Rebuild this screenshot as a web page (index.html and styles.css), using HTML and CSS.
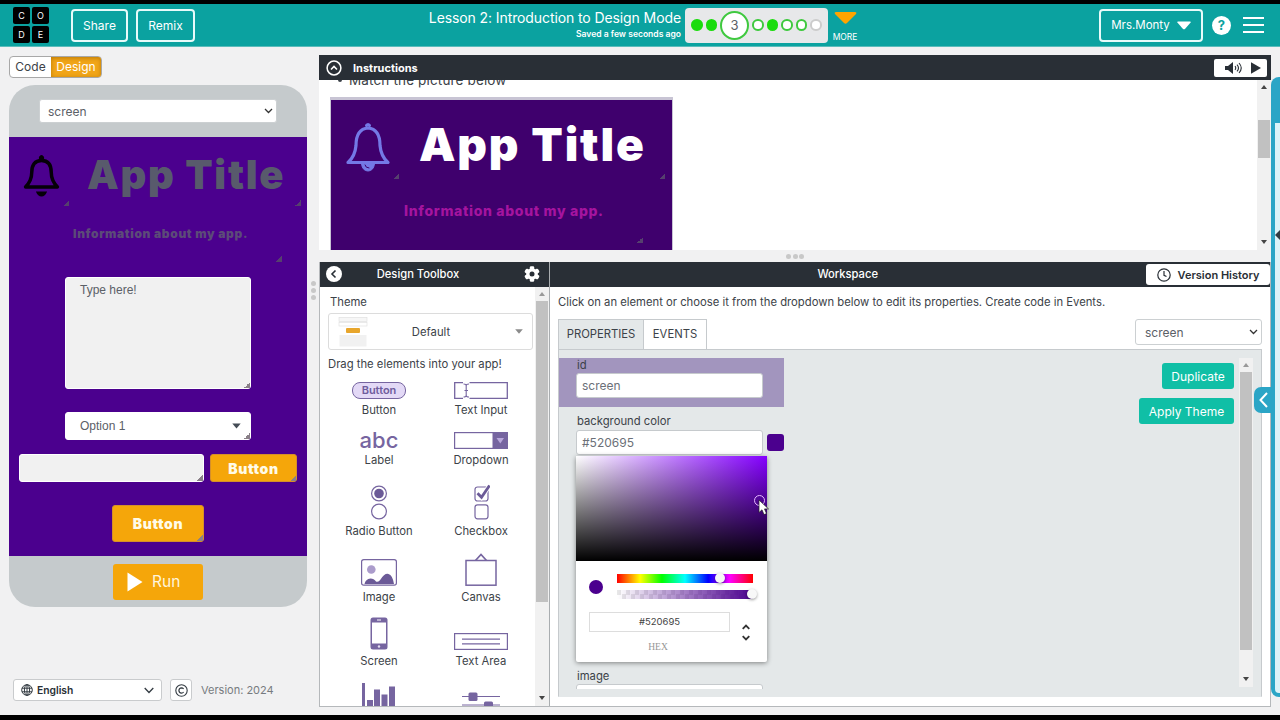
FILE: index.html
```html
<!DOCTYPE html>
<html lang="en">
<head>
  <meta charset="UTF-8" />
  <meta name="viewport" content="width=device-width, initial-scale=1.0" />
  <title>App Lab - Introduction to Design Mode</title>
  <link rel="stylesheet" href="styles.css">
</head>
<body>
  <header class="header">
    <div class="logo"><span>C</span><span>O</span><span>D</span><span>E</span></div>
    <button class="header-btn share">Share</button>
    <button class="header-btn remix">Remix</button>
    <div class="lesson">
      <div class="lesson-title">Lesson 2: Introduction to Design Mode</div>
      <div class="lesson-saved">Saved a few seconds ago</div>
    </div>
    <div class="progress">
      <i class="dot done"></i>
      <i class="dot done"></i>
      <span class="current">3</span>
      <i class="dot open"></i>
      <i class="dot done"></i>
      <i class="dot open"></i>
      <i class="dot open"></i>
      <i class="dot"></i>
    </div>
    <div class="more">
      <svg width="23" height="14" viewBox="0 0 23 14"><path d="M2 1h19q2 0 1 2l-9 9q-1.500 1.500-3 0l-9-9q-1-2 1-2z" fill="#ffa400"/></svg>
      <span>MORE</span>
    </div>
    <button class="header-btn user">
      <span>Mrs.Monty</span>
      <svg width="14" height="9" viewBox="0 0 14 9"><path d="M1 .5h12q1 0 .6 1l-5.400 6.300q-1.200 1-2.400 0L.4 1.500q-.4-1 .6-1z" fill="#fff"/></svg>
    </button>
    <span class="help">?</span>
    <div class="menu"><i></i><i></i><i></i></div>
  </header>

  <div class="main">
    <div class="left">
      <div class="mode-toggle">
        <span class="mode">Code</span><span class="mode active">Design</span>
      </div>

      <div class="phone">
        <div class="phone-top">
          <div class="select phone-select">
            <span>screen</span>
            <svg width="9" height="6" viewBox="0 0 9 6"><path d="M1 1l3.500 3.500L8 1" fill="none" stroke="#333" stroke-width="1.300"/></svg>
          </div>
        </div>
        <div class="app-screen">
          <svg class="app-bell" width="37" height="43" viewBox="0 0 36 43" preserveAspectRatio="none">
            <path d="M2.500 33q6-6.500 6-14.500 0-12 9.500-12t9.500 12q0 8 6 14.500z" fill="none" stroke="#050008" stroke-width="3.400" stroke-linejoin="round"/>
            <path d="M15.500 5V3q2.500-4 5 0v2zM12.500 37.500h11q-2 5-5.500 5t-5.500-5z" fill="#050008"/>
          </svg>
          <i class="grip g1"></i>
          <div class="app-title">App Title</div>
          <i class="grip g2"></i>
          <div class="app-info">Information about my app.</div>
          <i class="grip g3"></i>
          <div class="app-textarea">Type here!<i class="corner"></i></div>
          <div class="app-dropdown">Option 1
            <svg width="9" height="6" viewBox="0 0 9 6"><path d="M.3.500h8.400L4.500 5.500z" fill="#444c55"/></svg>
            <i class="corner"></i>
          </div>
          <div class="app-input"><i class="corner"></i></div>
          <div class="app-button b1">Button<i class="corner"></i></div>
          <div class="app-button b2">Button<i class="corner"></i></div>
        </div>
        <div class="phone-bottom">
          <button class="run">
            <svg width="16" height="20" viewBox="0 0 16 20"><path d="M.5.500L15.500 10 .5 19.500z" fill="#fff"/></svg>
            <span>Run</span>
          </button>
        </div>
      </div>

      <div class="footer">
        <div class="language">
          <svg width="12" height="12" viewBox="0 0 12 12" fill="none" stroke="#333b42"><circle cx="6" cy="6" r="5.300"/><ellipse cx="6" cy="6" rx="2.600" ry="5.300"/><path d="M1 4.200h10M1 7.800h10M6 .7v10.600"/></svg>
          <span>English</span>
          <svg width="10" height="7" viewBox="0 0 10 7"><path d="M.7 1L5 5.500 9.300 1" fill="none" stroke="#333b42" stroke-width="1.300"/></svg>
        </div>
        <div class="copyright">
          <svg width="13" height="13" viewBox="0 0 13 13" fill="none" stroke="#333b42"><circle cx="6.500" cy="6.500" r="5.700" stroke-width="1.100"/><path d="M8.600 5q-.8-1.200-2.100-1.200Q4 4 3.900 6.500 4 9 6.500 9.200q1.300 0 2.100-1.200" stroke-width="1.200"/></svg>
        </div>
        <span class="version">Version: 2024</span>
      </div>
    </div>

    <div class="resize-v"><i></i><i></i><i></i></div>

    <div class="right">
      <div class="bar instructions-bar">
        <svg width="16" height="16" viewBox="0 0 16 16" fill="none" stroke="#fff"><circle cx="8" cy="8" r="6.900" stroke-width="1.500"/><path d="M5 9.500l3-3 3 3" stroke-width="1.600"/></svg>
        <span class="instructions-title">Instructions</span>
        <div class="audio">
          <svg width="18" height="12" viewBox="0 0 18 12"><path d="M0 4h3l5-4v12l-5-4H0z" fill="#292f36"/><path d="M10 4.200q1.500 1.800 0 3.600M12 2.600q3 3.400 0 6.800M14 1q4.500 5 0 10" fill="none" stroke="#292f36" stroke-width="1.100"/></svg>
          <svg width="10" height="12" viewBox="0 0 10 12"><path d="M0 .3L10 6 0 11.700z" fill="#292f36"/></svg>
        </div>
      </div>
      <div class="instructions">
        <div class="instructions-body">
          <div class="step"><i></i><span>Match the picture below</span></div>
          <div class="example">
            <svg class="ex-bell" width="46" height="50" viewBox="0 0 46 50" fill="none" stroke="#7479e6" stroke-linejoin="round" stroke-linecap="round">
              <path d="M3 40.500q7-6 8-17Q11 7 23 6q12 1 12 17.500 1 11 8 17z" stroke-width="3.200"/>
              <path d="M21.500 3.500q1.500-2 3 0" stroke-width="3"/>
              <path d="M16.500 42q1 7 6.500 7t6.500-7z" fill="#7479e6" stroke-width="1"/>
              <path d="M20 43q.5 3 4 3" stroke="#3f006d" stroke-width="1"/>
            </svg>
            <i class="grip e1"></i>
            <div class="ex-title">App Title</div>
            <i class="grip e2"></i>
            <div class="ex-info">Information about my app.</div>
            <i class="grip e3"></i>
          </div>
        </div>
        <div class="scrollbar instr-scroll"><b class="up dark"></b><i class="thumb"></i><b class="down"></b></div>
      </div>
      <div class="resize-h"><i></i><i></i><i></i></div>

      <div class="panels">
        <div class="toolbox">
          <div class="bar toolbox-bar">
            <svg width="16" height="16" viewBox="0 0 16 16"><circle cx="8" cy="8" r="8" fill="#fff"/><path d="M9.500 4.500L6 8l3.500 3.500" fill="none" stroke="#292f36" stroke-width="1.600"/></svg>
            <span class="toolbox-title">Design Toolbox</span>
            <svg width="16" height="16" viewBox="0 0 16 16"><g fill="#fff"><rect x="5.800" y=".3" width="4.400" height="15.400" rx="1.200"/><rect x="5.800" y=".3" width="4.400" height="15.400" rx="1.200" transform="rotate(60 8 8)"/><rect x="5.800" y=".3" width="4.400" height="15.400" rx="1.200" transform="rotate(120 8 8)"/><circle cx="8" cy="8" r="5.800"/></g><circle cx="8" cy="8" r="2.500" fill="#292f36"/></svg>
          </div>
          <div class="toolbox-wrap">
            <div class="toolbox-body">
              <div class="theme-label">Theme</div>
              <div class="theme">
                <svg width="30" height="30" viewBox="0 0 30 30"><rect x="1" y=".5" width="28" height="4" fill="#f6f6f6" stroke="#ddd" stroke-width=".6"/><rect x="1" y="5.500" width="28" height="3.500" fill="#fff" stroke="#ddd" stroke-width=".6"/><rect x="8" y="11" width="14" height="5" rx="1" fill="#e8a62c"/><rect x="1.500" y="18" width="27" height="11.500" fill="#f1f1f1"/></svg>
                <span>Default</span>
                <svg width="8" height="5" viewBox="0 0 8 5"><path d="M.2.200h7.600L4 4.800z" fill="#8b8b8b"/></svg>
              </div>
              <div class="drag-label">Drag the elements into your app!</div>
              <div class="elements">
                <div class="el">
                  <div class="icon-button">Button</div>
                  <span>Button</span>
                </div>
                <div class="el">
                  <svg width="54" height="17" viewBox="0 0 54 17" fill="none" stroke="#7665a0"><path d="M9 .7H.7v15.600H9M15.500.7h37.800v15.600H15.500" stroke-width="1.300"/><path d="M9.500 2q2.700 0 2.700 1.500V13.500q0 1.500-2.700 1.500M15 2q-2.800 0-2.800 1.500M15 15q-2.800 0-2.800-1.500M10.500 8.500h3.500" stroke-width="1.100"/></svg>
                  <span>Text Input</span>
                </div>
                <div class="el">
                  <div class="icon-label">abc</div>
                  <span>Label</span>
                </div>
                <div class="el">
                  <svg width="54" height="17" viewBox="0 0 54 17"><rect x=".6" y=".6" width="52.800" height="15.800" fill="#fff" stroke="#7665a0" stroke-width="1.200"/><path d="M38.500 0H54v17H38.500z" fill="#7665a0"/><path d="M42.500 6h7.500l-3.700 5.500z" fill="#b9a8dc"/></svg>
                  <span>Dropdown</span>
                </div>
                <div class="el">
                  <svg width="18" height="35" viewBox="0 0 18 35"><g fill="none" stroke="#7665a0" stroke-width="1.200"><circle cx="9" cy="8.500" r="7.400"/><circle cx="9" cy="26.500" r="7.400"/></g><circle cx="9" cy="8.500" r="4.800" fill="#6b5a97"/></svg>
                  <span>Radio Button</span>
                </div>
                <div class="el">
                  <svg width="18" height="36" viewBox="0 0 18 36" fill="none" stroke="#7665a0"><rect x="3" y="3" width="13" height="14" rx="2.500" stroke-width="1.200"/><rect x="3" y="20.800" width="13" height="14" rx="2.500" stroke-width="1.200"/><path d="M5.500 9.500l4 4L17.500 1.500" stroke="#fff" stroke-width="4.500"/><path d="M5.500 9.200l4 4L17.500 1.500" stroke="#6b5a97" stroke-width="2.800"/></svg>
                  <span>Checkbox</span>
                </div>
                <div class="el">
                  <svg width="36" height="27" viewBox="0 0 36 27"><rect x=".6" y=".6" width="34.800" height="25.600" rx="2.200" fill="#fff" stroke="#7665a0" stroke-width="1.200"/><circle cx="10.300" cy="10.500" r="4.300" fill="#ab9ccb"/><path d="M3.500 25q1-5 6-5.500 3.500 0 5.500 3 2.500 1 4.500-2 4-6.500 8-5.500 4 1 5.500 10z" fill="#6b5a97"/></svg>
                  <span>Image</span>
                </div>
                <div class="el">
                  <svg width="32" height="33" viewBox="0 0 32 33" fill="none" stroke="#7665a0" stroke-width="1.500"><rect x="1" y="7.500" width="30" height="24.700"/><path d="M10.500 7.500L16 1.500l5.500 6" stroke-width="1.800"/></svg>
                  <span>Canvas</span>
                </div>
                <div class="el">
                  <svg width="18" height="33" viewBox="0 0 18 33"><rect x=".5" y=".5" width="17" height="32" rx="2.500" fill="#7665a0"/><path d="M2 5.500h14v21H2z" fill="#fff"/><path d="M7 3h4" stroke="#fff"/><circle cx="9" cy="29.500" r="1.200" fill="#e5def2"/></svg>
                  <span>Screen</span>
                </div>
                <div class="el">
                  <svg width="54" height="17" viewBox="0 0 54 17" fill="none" stroke="#7665a0" stroke-width="1.200"><rect x=".6" y=".6" width="52.800" height="15.800"/><path d="M8 6.200h38M8 10.800h38"/></svg>
                  <span>Text Area</span>
                </div>
                <div class="el last">
                  <svg width="34" height="30" viewBox="0 0 34 30" fill="#7665a0"><path d="M0 0h3v30H0zM5 17h6v13H5zM12 6.500h6V30h-6zM19.500 11.500h6V30h-6zM27 3.500h6V30h-6z"/></svg>
                </div>
                <div class="el last">
                  <svg width="38" height="30" viewBox="0 0 38 30"><path d="M0 13.500h38M0 22h38" stroke="#7665a0"/><rect x="6.500" y="9.500" width="9" height="8.500" rx="1.500" fill="#7665a0"/><rect x="22" y="18.500" width="9" height="8.500" rx="1.500" fill="#7665a0"/></svg>
                </div>
              </div>
            </div>
            <div class="scrollbar toolbox-scroll"><b class="up"></b><i class="thumb"></i><b class="down"></b></div>
          </div>
        </div>

        <div class="workspace">
          <div class="bar workspace-bar">
            <span class="workspace-title">Workspace</span>
            <div class="history">
              <svg width="14" height="14" viewBox="0 0 14 14" fill="none" stroke="#292f36" stroke-width="1.200"><circle cx="7" cy="7" r="6.200"/><path d="M7 3v4.300l2.500 1.200"/></svg>
              <span>Version History</span>
            </div>
          </div>
          <div class="workspace-body">
            <div class="hint">Click on an element or choose it from the dropdown below to edit its properties. Create code in Events.</div>
            <div class="tab-row">
              <div class="tabs"><span class="tab active">PROPERTIES</span><span class="tab events">EVENTS</span></div>
              <div class="select element-select">
                <span>screen</span>
                <svg width="9" height="6" viewBox="0 0 9 6"><path d="M1 1l3.500 3.500L8 1" fill="none" stroke="#333" stroke-width="1.300"/></svg>
              </div>
            </div>
            <div class="properties">
              <div class="fields">
                <div class="field id-field">
                  <label>id</label>
                  <div class="text-box">screen</div>
                </div>
                <div class="field color-field">
                  <label>background color</label>
                  <div class="color-row"><div class="text-box">#520695</div><i class="swatch"></i></div>
                  <div class="picker">
                    <div class="saturation">
                      <i class="pick-ring"></i>
                      <svg class="cursor" width="12" height="17" viewBox="0 0 12 17"><path d="M1 1v12.500l3-2.700 2 4.800 2.500-1-2-4.700h4z" fill="#fff" stroke="#222" stroke-width=".7"/></svg>
                    </div>
                    <div class="sliders">
                      <i class="current-color"></i>
                      <div class="tracks">
                        <div class="hue"><i class="knob"></i></div>
                        <div class="alpha"><i class="knob"></i></div>
                      </div>
                    </div>
                    <div class="hex-row">
                      <div class="hex">
                        <div class="hex-box">#520695</div>
                        <span>HEX</span>
                      </div>
                      <svg width="8" height="17" viewBox="0 0 8 17" fill="none" stroke="#333" stroke-width="1.800"><path d="M.7 4.800L4 1.500l3.300 3.300M.7 12.200L4 15.500l3.300-3.300"/></svg>
                    </div>
                  </div>
                </div>
                <div class="field image-field">
                  <label>image</label>
                  <div class="text-box"></div>
                </div>
              </div>
              <div class="actions">
                <button class="action duplicate">Duplicate</button>
                <button class="action apply">Apply Theme</button>
              </div>
              <div class="scrollbar prop-scroll"><b class="up"></b><i class="thumb"></i><b class="down"></b></div>
            </div>
          </div>
        </div>
      </div>
    </div>

    <aside class="side-panel">
      <div class="side-inner"><i class="side-arrow"></i></div>
      <div class="side-tab"><svg width="9" height="16" viewBox="0 0 9 16"><path d="M8 1L1.500 8 8 15" fill="none" stroke="#fff" stroke-width="2"/></svg></div>
    </aside>
  </div>
</body>
</html>
```
FILE: styles.css
```css
* {
  box-sizing: border-box;
}
body {
  display: flex;
  flex-direction: column;
  width: 1280px;
  height: 720px;
  margin: 0;
  border-top: 4px solid #000;
  border-bottom: 5px solid #000;
  overflow: hidden;
  background: #f1f1f2;
  color: #3c4248;
  font-family: Inter, "Open Sans", sans-serif;
  font-size: 11.270px;
  white-space: nowrap;
}
button {
  padding: 0;
  border: 0;
  font: inherit;
}
svg {
  display: block;
  flex: none;
}

/* header */
.header {
  display: flex;
  align-items: center;
  flex: none;
  height: 43px;
  padding-left: 13px;
  background: #0ba2a0;
  border-bottom: 1px solid #5bbcbb;
  color: #fff;
}
.logo {
  display: grid;
  grid-template-columns: 17px 17px;
  gap: 2px;
  margin-right: 22px;
}
.logo span {
  height: 17px;
  border-radius: 2px;
  background: #000;
  font-size: 9px;
  line-height: 17px;
  text-align: center;
}
.header-btn {
  display: flex;
  align-items: center;
  justify-content: center;
  height: 33px;
  border: 2px solid #e8fbfa;
  border-radius: 4px;
  background: none;
  color: #fff;
  font-size: 12px;
}
.share {
  width: 57px;
  margin-right: 8px;
}
.remix {
  width: 59px;
}
.lesson {
  flex: none;
  width: 486px;
  text-align: right;
}
.lesson-title {
  font-size: 14px;
  letter-spacing: -.1px;
  line-height: 18px;
}
.lesson-saved {
  font-size: 8.550px;
  font-weight: 600;
  line-height: 14px;
}
.progress {
  display: flex;
  align-items: center;
  width: 143px;
  height: 35px;
  margin-left: 4px;
  padding-left: 6px;
  gap: 3px;
  border-radius: 4px;
  background: #e7e8ea;
}
.dot {
  width: 11.500px;
  height: 11.500px;
  flex: none;
  border: 2px solid #ccc;
  border-radius: 50%;
  background: #fff;
}
.dot.done {
  border-color: #1bdc0e;
  background: #1bdc0e;
}
.dot.open {
  border-color: #3fc93f;
}
.current {
  width: 29px;
  height: 29px;
  flex: none;
  border: 2px solid #3fc93f;
  border-radius: 50%;
  background: #fff;
  color: #5b6067;
  font-size: 13px;
  line-height: 25px;
  text-align: center;
}
.more {
  display: flex;
  flex-direction: column;
  align-items: center;
  width: 24px;
  margin: 4px 0 0 5px;
  gap: 6px;
  font-size: 8.500px;
  line-height: 12px;
}
.user {
  width: 104px;
  margin-left: 242px;
  gap: 7px;
  font-size: 11.500px;
}
.help {
  width: 19px;
  height: 19px;
  margin-left: 9px;
  border-radius: 50%;
  background: #fff;
  color: #0ba2a0;
  font-size: 13px;
  font-weight: 700;
  line-height: 19px;
  text-align: center;
}
.menu {
  display: flex;
  flex-direction: column;
  width: 21px;
  margin-left: 12px;
  gap: 5px;
}
.menu i {
  height: 2px;
  background: #fff;
}

.main {
  display: flex;
  flex: 1;
  min-height: 0;
}

/* left column */
.left {
  display: flex;
  flex-direction: column;
  width: 307px;
  padding: 9px 0 0 9px;
}
.mode-toggle {
  display: flex;
  width: 93px;
  height: 22px;
  border: 1px solid #a8a8a8;
  border-radius: 4px;
  overflow: hidden;
  background: #fff;
  font-size: 12px;
  line-height: 19px;
}
.mode {
  width: 41px;
  text-align: center;
}
.mode.active {
  width: 50px;
  background: #f1a518;
  box-shadow: inset 0 1px 4px #b97804;
  color: #fff;
}
.phone {
  height: 522px;
  margin-top: 7px;
  border-radius: 26px;
  overflow: hidden;
  background: #c5cacc;
}
.phone-top {
  height: 52px;
  padding: 14px 0 0 30px;
}
.select {
  display: flex;
  align-items: center;
  justify-content: space-between;
  border: 1px solid #ccd0d2;
  border-radius: 3px;
  background: #fff;
  color: #5b6067;
  font-size: 12px;
}
.phone-select {
  width: 238px;
  height: 24px;
  padding: 0 3px 0 8px;
}
/* design canvas, elements are freely placed by the user */
.app-screen {
  position: relative;
  height: 419px;
  background: #4b008e;
}
.app-screen > *, .example > * {
  position: absolute;
}
.app-bell {
  left: 14px;
  top: 17px;
}
.app-title {
  left: 78px;
  top: 14px;
  color: #585a6c;
  font-size: 40px;
  font-weight: 900;
  letter-spacing: 1.700px;
  line-height: 48px;
}
.app-info {
  left: 64px;
  top: 88px;
  color: #5c4b78;
  font-size: 12px;
  font-weight: 900;
  letter-spacing: .64px;
  line-height: 18px;
}
.grip {
  width: 6px;
  height: 6px;
  background: linear-gradient(135deg, transparent 50%, #55406e 50%);
}
.g1 {
  left: 54px;
  top: 63px;
}
.g2 {
  left: 286px;
  top: 63px;
}
.g3 {
  left: 267px;
  top: 119px;
}
.app-textarea, .app-dropdown, .app-input {
  border: 1px solid #fff;
  border-radius: 3px;
  background: #f1f1f1;
  color: #5b6067;
  font-family: "Liberation Sans", Arial, sans-serif;
  font-size: 12px;
}
.app-textarea {
  left: 56px;
  top: 140px;
  width: 186px;
  height: 112px;
  padding: 5px 14px;
}
.app-dropdown {
  display: flex;
  align-items: center;
  justify-content: space-between;
  left: 56px;
  top: 275px;
  width: 186px;
  height: 28px;
  padding: 0 9px 0 14px;
  background: #fff;
}
.app-input {
  left: 10px;
  top: 317px;
  width: 185px;
  height: 28px;
}
.corner {
  position: absolute;
  right: 0;
  bottom: 0;
  width: 6px;
  height: 6px;
  background: linear-gradient(135deg, transparent 50%, #8a8088 50%);
}
.app-button {
  display: flex;
  align-items: center;
  justify-content: center;
  border: 1px solid #d58f2a;
  border-radius: 3px;
  background: #f5a60a;
  color: #fffbe8;
  font-size: 14px;
  font-weight: 900;
  letter-spacing: .6px;
}
.b1 {
  left: 201px;
  top: 317px;
  width: 87px;
  height: 28px;
}
.b2 {
  left: 103px;
  top: 368px;
  width: 92px;
  height: 37px;
}
.phone-bottom {
  padding: 8px 0 0 104px;
}
.run {
  display: flex;
  align-items: center;
  width: 90px;
  height: 36px;
  padding: 0 0 1px 14px;
  gap: 9px;
  border-radius: 3px;
  background: #f5a60a;
  color: #fff5dc;
  font-size: 15.500px;
}
.footer {
  display: flex;
  align-items: center;
  margin: 72px 0 0 4px;
}
.language, .copyright {
  display: flex;
  align-items: center;
  height: 22px;
  border: 1px solid #c9cbcd;
  border-radius: 3px;
  background: #fff;
}
.language {
  width: 149px;
  padding: 0 7px;
  color: #292f36;
  font-size: 10.300px;
  font-weight: 600;
}
.language span {
  flex: 1;
  margin-left: 4px;
}
.copyright {
  justify-content: center;
  width: 22px;
  margin: 0 9px 0 8px;
}
.version {
  color: #777b80;
  font-size: 11px;
}
.resize-v {
  display: flex;
  flex-direction: column;
  align-items: center;
  justify-content: center;
  width: 12px;
  height: 486px;
  gap: 2px;
}
.resize-v i, .resize-h i {
  width: 5px;
  height: 5px;
  border-radius: 50%;
  background: #c8c8c8;
}

/* instructions */
.right {
  display: flex;
  flex-direction: column;
  width: 952px;
  margin: 8px 0 8px;
}
.bar {
  display: flex;
  align-items: center;
  flex: none;
  height: 25px;
  background: #292f36;
  color: #fff;
  font-weight: 600;
}
.instructions-bar {
  position: relative;
  padding: 0 4px 0 7px;
  z-index: 1;
}
.instructions-title {
  margin-left: 11px;
  font-size: 11px;
  font-weight: 700;
}
.audio {
  display: flex;
  align-items: center;
  justify-content: center;
  width: 53px;
  height: 18px;
  margin-left: auto;
  padding-left: 5px;
  gap: 8px;
  border-radius: 2px;
  background: #fff;
}
.instructions {
  display: flex;
  flex: none;
  height: 170px;
  overflow: hidden;
  background: #fff;
}
.instructions-body {
  flex: 1;
  padding-left: 11px;
}
.step {
  display: flex;
  align-items: center;
  height: 17px;
  margin-top: -9px;
  padding-left: 8px;
  gap: 7px;
  font-size: 13.500px;
  letter-spacing: .15px;
}
.step i {
  width: 4px;
  height: 4px;
  border-radius: 50%;
  background: #3c4248;
}
.example {
  position: relative;
  width: 343px;
  height: 200px;
  margin-top: 9px;
  border: solid #c8c4d4;
  border-width: 3px 1px 0;
  background: #3f006d;
}
.ex-bell {
  left: 14px;
  top: 22px;
}
.ex-title {
  left: 88px;
  top: 19px;
  color: #fff;
  font-size: 46px;
  font-weight: 900;
  letter-spacing: 1.800px;
  line-height: 50px;
}
.ex-info {
  left: 73px;
  top: 101px;
  color: #a5149f;
  font-size: 14px;
  font-weight: 800;
  letter-spacing: .68px;
  line-height: 20px;
}
.e1 {
  left: 62px;
  top: 73px;
}
.e2 {
  left: 328px;
  top: 73px;
}
.e3 {
  left: 306px;
  top: 137px;
}
.resize-h {
  display: flex;
  align-items: center;
  justify-content: center;
  flex: none;
  height: 12px;
  gap: 1.500px;
}

/* scrollbars */
.scrollbar {
  display: flex;
  flex-direction: column;
  align-items: center;
  flex: none;
  width: 14px;
  background: #f1f1f1;
}
.scrollbar b {
  width: 0;
  height: 0;
  border: 3px solid transparent;
}
.scrollbar .up {
  margin-top: 2px;
  border-bottom: 4px solid #999;
}
.scrollbar .up.dark {
  border-bottom-color: #444;
}
.scrollbar .down {
  margin: auto 0 3px;
  border-top: 4px solid #444;
}
.thumb {
  width: 12px;
  background: #c1c1c1;
}
.instr-scroll .thumb {
  height: 38px;
  margin-top: 31px;
}
.toolbox-scroll .thumb {
  height: 301px;
  margin-top: 5px;
}
.prop-scroll .thumb {
  height: 278px;
  margin-top: 5px;
}

/* toolbox */
.panels {
  display: flex;
  flex: 1;
  min-height: 0;
  border: solid #b5b8bb;
  border-width: 0 1px 1px;
  background: #fff;
}
.toolbox {
  display: flex;
  flex-direction: column;
  width: 230px;
  border-right: 1px solid #a9adb0;
}
.toolbox-bar {
  justify-content: space-between;
  padding: 0 9px 1px 6px;
}
.toolbox-title, .workspace-title {
  font-size: 11.200px;
  font-weight: 500;
}
.toolbox-title {
  margin-right: 30px;
}
.toolbox-wrap {
  display: flex;
  flex: 1;
  min-height: 0;
}
.toolbox-body {
  width: 215px;
  padding: 8px 2px 0 8px;
  overflow: hidden;
}
.theme-label {
  padding-left: 2px;
  line-height: 15px;
}
.theme {
  display: flex;
  align-items: center;
  justify-content: space-between;
  width: 205px;
  height: 37px;
  margin-top: 3px;
  padding: 0 9px;
  border: 1px solid #dcdcdc;
  border-radius: 3px;
}
.theme span {
  margin-right: 21px;
}
.drag-label {
  margin-top: 7px;
  line-height: 15px;
}
.elements {
  display: grid;
  grid-template-columns: 102px 102px;
  grid-template-rows: 46px 50px 71px 66px 64px 50px;
}
.el {
  display: flex;
  flex-direction: column;
  align-items: center;
  justify-content: flex-end;
  gap: 3px;
  line-height: 16px;
}
.el.last {
  justify-content: flex-start;
  padding-top: 14px;
}
.icon-button {
  width: 54px;
  height: 17px;
  border: 1px solid #7665a0;
  border-radius: 8px;
  background: #e3d9f6;
  color: #6f5d9d;
  font-size: 11px;
  font-weight: 600;
  line-height: 15px;
  text-align: center;
}
.icon-label {
  color: #7665a0;
  font-size: 22px;
  font-weight: 500;
  line-height: 18px;
}

/* workspace */
.workspace {
  display: flex;
  flex-direction: column;
  flex: 1;
}
.workspace-bar {
  justify-content: flex-end;
  padding-right: 0;
}
.workspace-title {
  margin: 0 268px 1px 0;
}
.history {
  display: flex;
  align-items: center;
  justify-content: center;
  width: 124px;
  height: 21px;
  gap: 7px;
  border-radius: 3px;
  background: #fff;
  color: #292f36;
  font-size: 11px;
}
.workspace-body {
  padding: 8px 8px 0;
}
.hint {
  line-height: 15px;
}
.tab-row {
  display: flex;
  justify-content: space-between;
  height: 39px;
  padding-top: 9px;
}
.tabs {
  display: flex;
  height: 30px;
}
.tab {
  width: 63px;
  border: 1px solid #c6cacd;
  border-left: 0;
  border-bottom: 0;
  line-height: 29px;
  text-align: center;
}
.tab.active {
  width: 86px;
  border-left: 1px solid #c6cacd;
  background: #e4e8e9;
}
.element-select {
  width: 127px;
  height: 26px;
  padding: 0 3px 0 9px;
}
.properties {
  display: flex;
  height: 348px;
  padding: 8px 8px 9px 0;
  border: 1px solid #c6cacd;
  border-bottom-color: #e4e8e9;
  background: #e4e8e9;
}
.fields {
  flex: 1;
}
.field {
  position: relative;
  width: 225px;
  padding-left: 17px;
}
.field label {
  display: block;
  padding-left: 1px;
  line-height: 15px;
}
.id-field {
  height: 49px;
  background: #a295be;
}
.text-box {
  width: 187px;
  height: 25px;
  padding-left: 5px;
  border: 1px solid #c6cacd;
  border-radius: 3px;
  background: #fff;
  color: #6b7078;
  font-size: 12px;
  line-height: 23px;
}
.color-field {
  height: 262px;
  padding-top: 7px;
}
.color-row {
  display: flex;
  align-items: center;
  gap: 4px;
  margin-top: 1px;
}
.swatch {
  width: 17px;
  height: 17px;
  border-radius: 3px;
  background: #4b008e;
}
.image-field {
  height: 20px;
  overflow: hidden;
}
.actions {
  display: flex;
  flex-direction: column;
  align-items: flex-end;
  padding-top: 5px;
  gap: 9px;
  margin-right: 5px;
}
.action {
  width: 72px;
  height: 26px;
  border-radius: 3px;
  background: #10bfa6;
  color: #fff;
  font-size: 12px;
}
.apply {
  width: 95px;
}

/* colour picker popup */
.picker {
  position: absolute;
  left: 17px;
  top: 49px;
  width: 191px;
  height: 206px;
  border-radius: 2px;
  background: #fff;
  box-shadow: 0 1px 5px rgba(0, 0, 0, .45);
  z-index: 2;
}
.saturation {
  position: relative;
  height: 105px;
  background: linear-gradient(to top, #000, transparent), linear-gradient(to right, #fff, #8400ff);
}
.pick-ring {
  position: absolute;
  left: 178px;
  top: 39px;
  width: 11px;
  height: 11px;
  border: 1px solid #e5b8ff;
  border-radius: 50%;
}
.cursor {
  position: absolute;
  left: 182px;
  top: 43px;
}
.sliders {
  display: flex;
  align-items: center;
  padding: 13px 14px 0 13px;
  gap: 14px;
}
.current-color {
  width: 14px;
  height: 14px;
  border-radius: 50%;
  background: #4b008e;
}
.tracks {
  width: 137px;
}
.hue, .alpha {
  position: relative;
  height: 9px;
}
.hue {
  background: linear-gradient(to right, #f00, #ff0 17%, #0f0 33%, #0ff 50%, #00f 67%, #f0f 83%, #f00);
}
.alpha {
  margin-top: 7px;
  background: linear-gradient(to right, rgba(75, 0, 142, 0), #4b008e), conic-gradient(#fff 25%, #e8e8e8 0 50%, #fff 0 75%, #e8e8e8 0) 0 0 / 9px 9px;
}
.knob {
  position: absolute;
  top: -1px;
  width: 10px;
  height: 10px;
  border-radius: 50%;
  background: #f8f8f8;
  box-shadow: 0 1px 3px rgba(0, 0, 0, .4);
}
.hue .knob {
  left: 98px;
}
.alpha .knob {
  left: 130px;
}
.hex-row {
  display: flex;
  align-items: center;
  padding: 13px 0 0 13px;
  gap: 12px;
}
.hex {
  width: 141px;
  text-align: center;
}
.hex-box {
  height: 20px;
  border: 1px solid #ddd;
  color: #444;
  font-size: 9.500px;
  line-height: 18px;
}
.hex span {
  display: block;
  margin-top: 9px;
  padding-right: 3px;
  color: #969696;
  font-family: "Liberation Serif", serif;
  font-size: 9.500px;
  line-height: 12px;
}

/* right side drawer */
.side-panel {
  position: relative;
  width: 9px;
  height: 620px;
  margin-top: 30px;
  padding: 46px 0 4px 4px;
  border-radius: 8px 0 0 8px;
  background: #2ba5c6;
}
.side-inner {
  position: relative;
  height: 570px;
  border-radius: 0 0 0 4px;
  background: #dcf3f8;
}
.side-arrow {
  position: absolute;
  left: 0;
  top: 107px;
  border: 5px solid transparent;
  border-left: 0;
  border-right-color: #333b42;
}
.side-tab {
  position: absolute;
  left: -17px;
  top: 310px;
  width: 18px;
  height: 26px;
  padding: 5px 0 0 5px;
  border-radius: 7px 0 0 7px;
  background: #2ba5c6;
}
```
